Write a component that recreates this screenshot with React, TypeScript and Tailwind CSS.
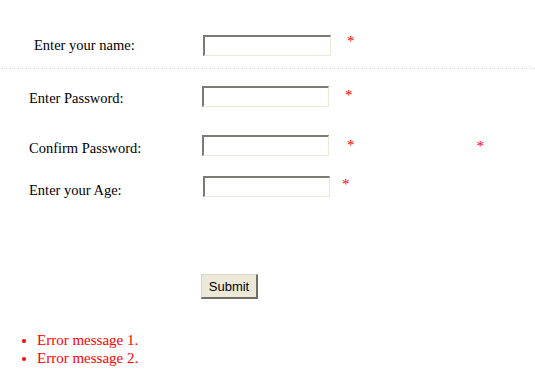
import React from "react";

const inputCls =
  "block h-[21px] shrink-0 bg-white border-t-2 border-l-2 border-b border-r border-t-[#7c7b72] border-l-[#7c7b72] border-b-[#ece9d8] border-r-[#ece9d8] outline-none";

function Star({ className }: { className?: string }) {
  return (
    <span className={"block text-[15px] leading-[14px] text-[#ff0000] " + (className ?? "")}>
      *
    </span>
  );
}

export default function App() {
  return (
    <div className="w-[535px] h-[392px] bg-white text-black font-['Liberation_Serif',serif] text-[14.5px] overflow-hidden">
      {/* name */}
      <div className="flex items-start h-[21px] mt-[35px]">
        <span className="block w-[203px] pl-[34px] leading-[21px]">Enter your name:</span>
        <input className={inputCls + " w-[128px]"} />
        <Star className="ml-[16px] -mt-[1px]" />
      </div>
      <div className="mt-[12px] h-px w-full bg-[linear-gradient(to_right,transparent_2px,#c4c4c4_2px,#c4c4c4_3px,transparent_3px)] bg-[length:4px_1px]" />

      {/* password */}
      <div className="flex items-start h-[21px] mt-[17px]">
        <span className="block w-[202px] pl-[29px] mt-[2px] leading-[21px]">Enter Password:</span>
        <input type="password" className={inputCls + " w-[127px]"} />
        <Star className="ml-[16px] mt-[2px]" />
      </div>

      {/* confirm */}
      <div className="flex items-start h-[21px] mt-[28px]">
        <span className="block w-[202px] pl-[29px] mt-[3px] leading-[21px]">Confirm Password:</span>
        <input type="password" className={inputCls + " w-[127px]"} />
        <Star className="ml-[18px] mt-[3px]" />
        <Star className="ml-[122px] mt-[4px]" />
      </div>

      {/* age */}
      <div className="flex items-start h-[21px] mt-[20px]">
        <span className="block w-[203px] pl-[29px] mt-[4px] leading-[21px]">Enter your Age:</span>
        <input className={inputCls + " w-[127px]"} />
        <Star className="ml-[12px] mt-[1px]" />
      </div>

      <div className="mt-[77px] pl-[201px]">
        <button className="block w-[57px] h-[25px] bg-[#ece9d8] border-t border-l border-b-2 border-r-2 border-t-[#d8d6cc] border-l-[#d8d6cc] border-b-[#716f64] border-r-[#716f64] font-['Liberation_Sans',sans-serif] text-[13px] leading-none text-black">
          Submit
        </button>
      </div>

      <ul className="mt-[32px] list-disc pl-[37px] text-[15px] leading-[18px] text-[#ff0000]">
        <li>Error message 1.</li>
        <li>Error message 2.</li>
      </ul>
    </div>
  );
}
